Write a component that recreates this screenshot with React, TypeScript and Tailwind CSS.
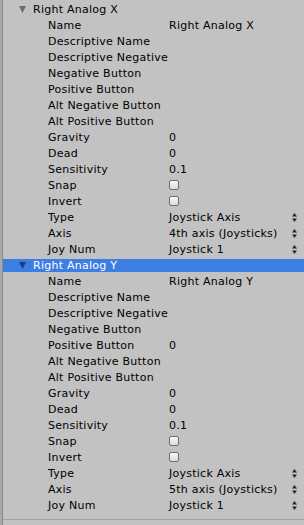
import React from "react";

type Field = {
  label: string;
  value?: string;
  kind?: "text" | "check" | "select";
};

const axisFields = (name: string, positive: string, axis: string): Field[] => [
  { label: "Name", value: name },
  { label: "Descriptive Name" },
  { label: "Descriptive Negative" },
  { label: "Negative Button" },
  { label: "Positive Button", value: positive },
  { label: "Alt Negative Button" },
  { label: "Alt Positive Button" },
  { label: "Gravity", value: "0" },
  { label: "Dead", value: "0" },
  { label: "Sensitivity", value: "0.1" },
  { label: "Snap", kind: "check" },
  { label: "Invert", kind: "check" },
  { label: "Type", value: "Joystick Axis", kind: "select" },
  { label: "Axis", value: axis, kind: "select" },
  { label: "Joy Num", value: "Joystick 1", kind: "select" },
];

const sections = [
  { title: "Right Analog X", selected: false, fields: axisFields("Right Analog X", "", "4th axis (Joysticks)") },
  { title: "Right Analog Y", selected: true, fields: axisFields("Right Analog Y", "0", "5th axis (Joysticks)") },
];

function SortArrows() {
  return (
    <svg width="5" height="9" viewBox="0 0 5 9" className="shrink-0">
      <path d="M2.5 0 L5 3.5 L0 3.5 Z" fill="#2a2a2a" />
      <path d="M0 5.5 L5 5.5 L2.5 9 Z" fill="#2a2a2a" />
    </svg>
  );
}

function Checkbox() {
  return (
    <div className="w-[10px] h-[10px] rounded-[2px] border border-[#6f6f6f] bg-gradient-to-b from-[#fbfbfb] to-[#d9d9d9]" />
  );
}

function Row({ field }: { field: Field }) {
  return (
    <div className="h-4 flex items-center">
      <div className="w-[166px] pl-[45px] shrink-0 whitespace-nowrap">{field.label}</div>
      <div className="flex-1 flex items-center pr-[7px]">
        {field.kind === "check" ? (
          <Checkbox />
        ) : (
          <>
            <span className="flex-1 whitespace-nowrap">{field.value}</span>
            {field.kind === "select" && <SortArrows />}
          </>
        )}
      </div>
    </div>
  );
}

export default function App() {
  return (
    <div
      className="w-[304px] h-[525px] bg-[#c2c2c2] flex text-[11px] tracking-[0.25px] text-black leading-none overflow-hidden"
      style={{ fontFamily: '"DejaVu Sans", Verdana, sans-serif' }}
    >
      <div className="w-[3px] bg-[#a9a9a9] border-r border-[#8a8a8a] shrink-0" />
      <div className="flex-1 flex flex-col pt-px border-b border-[#a3a3a3] mb-[5px]">
        {sections.map((s) => (
          <div key={s.title}>
            <div className="h-4 flex items-center">
              <div
                className={`h-[13px] w-full flex items-center ${s.selected ? "bg-[#3d7ee3] text-white" : ""}`}
              >
                <svg width="7" height="7" viewBox="0 0 7 7" className="ml-[16px] mr-[7px]">
                  <path d="M0 0 L7 0 L3.5 7 Z" fill={s.selected ? "#1d3f78" : "#6b6b6b"} />
                </svg>
                <span className="whitespace-nowrap">{s.title}</span>
              </div>
            </div>
            {s.fields.map((f) => (
              <Row key={f.label} field={f} />
            ))}
          </div>
        ))}
      </div>
    </div>
  );
}
